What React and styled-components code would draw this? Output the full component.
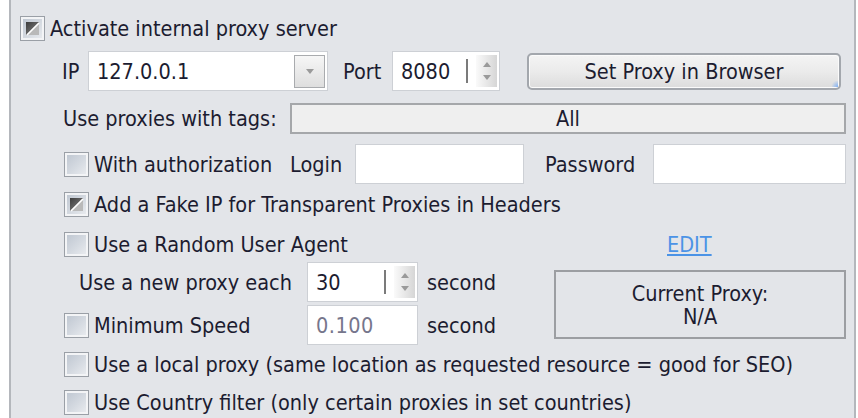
import React from 'react';
import styled, { createGlobalStyle } from 'styled-components';

const Global = createGlobalStyle`
  html, body {
    margin: 0;
    padding: 0;
    background: #ffffff;
  }
  body {
    font-family: "DejaVu Sans Condensed", "DejaVu Sans", sans-serif;
    font-size: 21.5px;
    color: #1c1c30;
  }
`;

const Panel = styled.div`
  box-sizing: border-box;
  margin-left: 9px;
  width: 847px;
  height: 418px;
  padding-top: 14px;
  background: #e3e5e9;
  border-left: 2px solid #b4b7bc;
  border-right: 2px solid #b4b7bc;
  overflow: hidden;
`;

const Row = styled.div`
  display: flex;
  align-items: center;
  height: ${p => p.$h}px;
  margin-top: ${p => p.$mt || 0}px;
  padding-left: ${p => p.$pl || 0}px;
  white-space: nowrap;
`;

const Label = styled.span`
  display: inline-block;
  flex: none;
  width: ${p => (p.$w ? `${p.$w}px` : 'auto')};
  margin-left: ${p => p.$ml || 0}px;
`;

const Box = styled.span`
  box-sizing: border-box;
  display: inline-block;
  flex: none;
  width: 25px;
  height: 25px;
  border: 1px solid #9a9fa6;
  box-shadow: inset 0 0 0 2px #f3f4f6;
  background: linear-gradient(135deg, #bcc4cf 0%, #d5dae1 55%, #eceef1 100%);
  margin-right: 5px;
  position: relative;
`;

const Item = styled.label`
  display: flex;
  align-items: center;
  flex: none;
  width: ${p => (p.$w ? `${p.$w}px` : 'auto')};
`;

function CheckBox({ checked, label, w }) {
  return (
    <Item $w={w}>
      <Box>
        {checked && (
          <svg width="23" height="23" viewBox="0 0 23 23" style={{ position: 'absolute', left: 0, top: 0 }}>
            <defs>
              <linearGradient id="ck" x1="0" y1="0" x2="1" y2="1">
                <stop offset="0" stopColor="#3c3c3c" />
                <stop offset="1" stopColor="#8a8a8a" />
              </linearGradient>
            </defs>
            <rect x="5" y="5" width="13" height="13" fill="#b9b9b9" />
            <polygon points="5,5 18,5 5,18" fill="url(#ck)" />
            <line x1="18" y1="6" x2="6" y2="18" stroke="#ffffff" strokeWidth="1.6" />
          </svg>
        )}
      </Box>
      <span>{label}</span>
    </Item>
  );
}

const Field = styled.div`
  box-sizing: border-box;
  display: flex;
  align-items: center;
  flex: none;
  width: ${p => p.$w}px;
  height: ${p => p.$h || 40}px;
  background: #ffffff;
  border: 1px solid #cdd0d5;
  padding-left: 8px;
  color: ${p => (p.$disabled ? '#76768c' : '#1c1c30')};
  letter-spacing: ${p => (p.$disabled ? '0.5px' : '0')};
`;

const FieldText = styled.span`
  flex: 1;
`;

const DropBtn = styled.span`
  box-sizing: border-box;
  width: 31px;
  height: 33px;
  margin-right: 2px;
  border: 1px solid #a9abae;
  background: linear-gradient(180deg, #f6f6f6, #dedede);
  display: flex;
  align-items: center;
  justify-content: center;
`;

const SpinSep = styled.span`
  width: 2px;
  height: 24px;
  background: #7b7b7b;
  margin-right: 8px;
`;

const SpinBtn = styled.span`
  width: ${p => p.$w || 21}px;
  height: 32px;
  margin-right: 2px;
  background: linear-gradient(90deg, #fafafa, #d6d6d6);
  display: flex;
  flex-direction: column;
  align-items: center;
  justify-content: space-around;
  padding: 3px 0;
  box-sizing: border-box;
`;

const Tri = ({ up }) => (
  <svg width="8" height="5" viewBox="0 0 8 5">
    <polygon points={up ? '4,0 8,5 0,5' : '0,0 8,0 4,5'} fill="#9a9a9a" />
  </svg>
);

function Spinner({ w, value }) {
  return (
    <Field $w={w}>
      <FieldText>{value}</FieldText>
      <SpinSep />
      <SpinBtn>
        <Tri up />
        <Tri />
      </SpinBtn>
    </Field>
  );
}

const Button = styled.button`
  box-sizing: border-box;
  flex: none;
  width: 314px;
  height: 37px;
  margin-left: 27px;
  border: 2px solid #a3a7ad;
  border-radius: 5px;
  background: linear-gradient(180deg, #f4f4f4 0%, #ebebeb 50%, #dcdcdc 100%);
  box-shadow: inset 0 0 0 1px #fbfbfb;
  font: inherit;
  color: inherit;
  position: relative;
  padding: 0;
  &::after {
    content: '';
    position: absolute;
    right: 1px;
    bottom: 1px;
    width: 6px;
    height: 6px;
    background: radial-gradient(circle at 100% 100%, #7fb0f5, rgba(127, 176, 245, 0) 80%);
  }
`;

const Tags = styled.div`
  box-sizing: border-box;
  flex: none;
  width: 556px;
  height: 31px;
  background: #efefef;
  border: 2px solid #a5a7aa;
  display: flex;
  align-items: center;
  justify-content: center;
`;

const Link = styled.a`
  color: #4b93e6;
  text-decoration: underline;
  cursor: pointer;
`;

const Split = styled.div`
  display: flex;
  margin-top: 5px;
`;

const LeftCol = styled.div`
  width: 543px;
  flex: none;
`;

const InfoBox = styled.div`
  box-sizing: border-box;
  width: 292px;
  height: 69px;
  margin-top: 8px;
  border: 2px solid #9c9ea2;
  display: flex;
  flex-direction: column;
  align-items: center;
  justify-content: center;
  line-height: 23px;
`;

export default function App() {
  return (
    <>
      <Global />
      <Panel>
        <Row $h={28} $pl={9}>
          <CheckBox checked label="Activate internal proxy server" />
        </Row>

        <Row $h={42} $mt={8} $pl={51}>
          <Label $w={26}>IP</Label>
          <Field $w={240}>
            <FieldText>127.0.0.1</FieldText>
            <DropBtn>
              <Tri />
            </DropBtn>
          </Field>
          <Label $w={49} $ml={15}>Port</Label>
          <Spinner w={108} value="8080" />
          <Button>Set Proxy in Browser</Button>
        </Row>

        <Row $h={31} $mt={11} $pl={52}>
          <Label $w={227}>Use proxies with tags:</Label>
          <Tags>All</Tags>
        </Row>

        <Row $h={40} $mt={10} $pl={53}>
          <CheckBox w={226} label="With authorization" />
          <Label $w={65}>Login</Label>
          <Field $w={169} />
          <Label $w={108} $ml={21}>Password</Label>
          <Field $w={193} />
        </Row>

        <Row $h={25} $mt={8} $pl={53}>
          <CheckBox checked label="Add a Fake IP for Transparent Proxies in Headers" />
        </Row>

        <Row $h={25} $mt={15} $pl={53}>
          <CheckBox w={603} label="Use a Random User Agent" />
          <Link>EDIT</Link>
        </Row>

        <Split>
          <LeftCol>
            <Row $h={40} $pl={68}>
              <Label $w={228}>Use a new proxy each</Label>
              <Spinner w={111} value="30" />
              <Label $ml={9}>second</Label>
            </Row>
            <Row $h={40} $mt={3} $pl={53}>
              <CheckBox w={243} label="Minimum Speed" />
              <Field $w={111} $disabled>0.100</Field>
              <Label $ml={9}>second</Label>
            </Row>
          </LeftCol>
          <InfoBox>
            <span>Current Proxy:</span>
            <span>N/A</span>
          </InfoBox>
        </Split>

        <Row $h={25} $mt={7} $pl={53}>
          <CheckBox label="Use a local proxy (same location as requested resource = good for SEO)" />
        </Row>

        <Row $h={24} $mt={13} $pl={53}>
          <CheckBox label="Use Country filter (only certain proxies in set countries)" />
        </Row>
      </Panel>
    </>
  );
}
